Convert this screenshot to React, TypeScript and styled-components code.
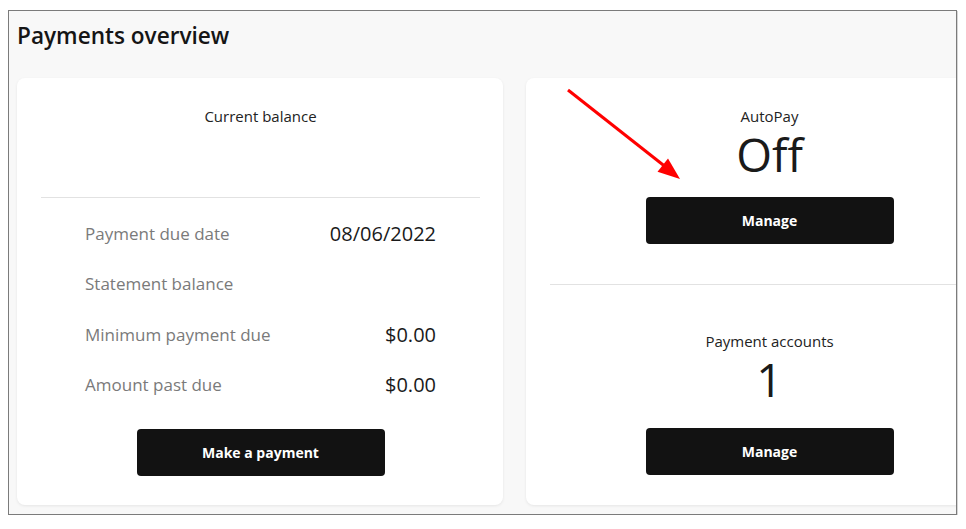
import React from "react";
import styled, { createGlobalStyle } from "styled-components";

const GlobalStyle = createGlobalStyle`
  html, body {
    margin: 0;
    padding: 0;
    background: #ffffff;
    font-family: "Open Sans", "Liberation Sans", Arial, sans-serif;
    color: #1a1a1a;
  }
`;

const Frame = styled.div`
  position: relative;
  box-sizing: border-box;
  width: 949px;
  height: 505px;
  margin: 10px 0 0 8px;
  border: 1px solid #7b7b7b;
  background: #f8f8f8;
  overflow: hidden;
  padding: 0 0 0 8px;
  box-shadow: 1px 1px 0 #d6d6d6;
`;

const Title = styled.h1`
  margin: 0;
  padding: 10px 0 0 0;
  font-size: 22.6px;
  line-height: 30px;
  font-weight: 600;
  color: #151515;
`;

const Cards = styled.div`
  display: grid;
  grid-template-columns: 486px 486px;
  column-gap: 23px;
  margin-top: 27px;
`;

const Card = styled.section`
  box-sizing: border-box;
  height: 427px;
  background: #ffffff;
  border-radius: 8px;
  box-shadow: 0 1px 3px rgba(0, 0, 0, 0.08);
  padding: 0 23px 0 24px;
  display: flex;
  flex-direction: column;
`;

const Section = styled.div<{ $top: number; $height?: number }>`
  display: flex;
  flex-direction: column;
  align-items: center;
  padding-top: ${(p) => p.$top}px;
  ${(p) => (p.$height ? `height: ${p.$height}px; box-sizing: border-box;` : "")}
`;

const Label = styled.div`
  font-size: 15px;
  line-height: 20px;
  color: #222;
`;

const BigValue = styled.div`
  font-size: 46px;
  line-height: 46px;
  font-weight: 400;
  color: #1a1a1a;
  margin-top: 5px;
`;

const Divider = styled.hr<{ $bleed?: boolean }>`
  border: 0;
  border-top: 1px solid #e2e2e2;
  margin: 0 ${(p) => (p.$bleed ? "-60px" : "0")} 0 0;
  align-self: stretch;
`;

const Rows = styled.div`
  display: flex;
  flex-direction: column;
  padding: 10px 44px 0;
`;

const Row = styled.div`
  display: flex;
  justify-content: space-between;
  align-items: center;
  height: 50.5px;
`;

const RowLabel = styled.span`
  font-size: 17px;
  color: #7a7a7a;
`;

const RowValue = styled.span`
  font-size: 20px;
  color: #1a1a1a;
`;

const Button = styled.button<{ $top: number }>`
  align-self: center;
  width: 248px;
  height: 47px;
  margin-top: ${(p) => p.$top}px;
  border: 0;
  border-radius: 4px;
  background: #121212;
  color: #ffffff;
  font-family: inherit;
  font-size: 14px;
  font-weight: 700;
  cursor: pointer;
`;

const Overlay = styled.svg`
  position: absolute;
  left: 0;
  top: 0;
  pointer-events: none;
`;

const rows = [
  { label: "Payment due date", value: "08/06/2022" },
  { label: "Statement balance", value: "" },
  { label: "Minimum payment due", value: "$0.00" },
  { label: "Amount past due", value: "$0.00" },
];

export default function App() {
  return (
    <>
      <GlobalStyle />
      <Frame>
        <Title>Payments overview</Title>
        <Cards>
          <Card>
            <Section $top={28} $height={119}>
              <Label>Current balance</Label>
            </Section>
            <Divider />
            <Rows>
              {rows.map((r) => (
                <Row key={r.label}>
                  <RowLabel>{r.label}</RowLabel>
                  <RowValue>{r.value}</RowValue>
                </Row>
              ))}
            </Rows>
            <Button $top={19}>Make a payment</Button>
          </Card>
          <Card>
            <Section $top={28} $height={206}>
              <Label>AutoPay</Label>
              <BigValue>Off</BigValue>
              <Button $top={20}>Manage</Button>
            </Section>
            <Divider $bleed />
            <Section $top={46}>
              <Label>Payment accounts</Label>
              <BigValue>1</BigValue>
              <Button $top={26}>Manage</Button>
            </Section>
          </Card>
        </Cards>
        <Overlay width="947" height="503" viewBox="9 11 947 503">
          <line x1="568" y1="90" x2="667" y2="168" stroke="#ff0000" strokeWidth="3" />
          <polygon points="680,179 657.5,171.8 668,158.5" fill="#ff0000" />
        </Overlay>
      </Frame>
    </>
  );
}
